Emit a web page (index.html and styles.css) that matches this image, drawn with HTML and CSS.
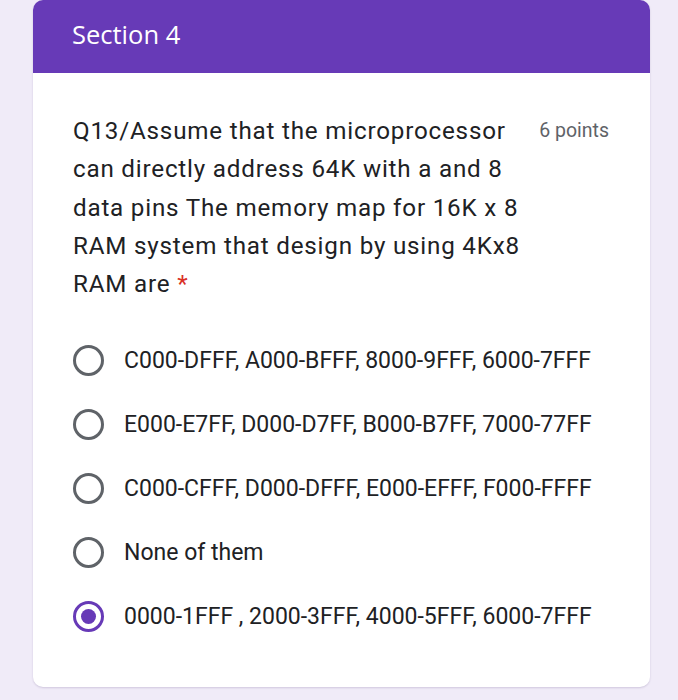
FILE: index.html
```html
<!DOCTYPE html>
<html>
<head>
<meta charset="utf-8">
<link rel="stylesheet" href="styles.css">
</head>
<body>
<div class="card">
  <div class="header">Section 4</div>
  <div class="body">
    <div class="qrow">
      <div class="qtitle">Q13/Assume that the microprocessor<br>can directly address 64K with a and 8<br>data pins The memory map for 16K x 8<br>RAM system that design by using 4Kx8<br>RAM are <span class="req">*</span></div>
      <div class="points">6 points</div>
    </div>
    <div class="options">
      <div class="opt"><span class="radio"></span><span class="label">C000-DFFF, A000-BFFF, 8000-9FFF, 6000-7FFF</span></div>
      <div class="opt"><span class="radio"></span><span class="label">E000-E7FF, D000-D7FF, B000-B7FF, 7000-77FF</span></div>
      <div class="opt"><span class="radio"></span><span class="label">C000-CFFF, D000-DFFF, E000-EFFF, F000-FFFF</span></div>
      <div class="opt"><span class="radio"></span><span class="label">None of them</span></div>
      <div class="opt"><span class="radio checked"></span><span class="label">0000-1FFF , 2000-3FFF, 4000-5FFF, 6000-7FFF</span></div>
    </div>
  </div>
</div>
</body>
</html>
```
FILE: styles.css
```css
html, body {
  margin: 0;
  padding: 0;
  background: #f0ebf8;
}
body {
  width: 678px;
  height: 700px;
  overflow: hidden;
  font-family: Roboto, "Liberation Sans", sans-serif;
}
.card {
  margin-left: 33px;
  width: 617px;
  background: #fff;
  border-radius: 10px;
  box-shadow: 0 1px 2px rgba(60, 40, 100, 0.18);
  overflow: hidden;
}
.header {
  background: #673ab7;
  color: #fff;
  height: 73px;
  box-sizing: border-box;
  padding-left: 39px;
  padding-top: 18px;
  font-size: 25.5px;
  line-height: 32px;
  font-family: "Open Sans", Roboto, sans-serif;
}
.body {
  padding: 39px 41px 39px 40px;
}
.qrow {
  display: flex;
  justify-content: space-between;
  align-items: flex-start;
}
.qtitle {
  width: 462px;
  flex: none;
  font-size: 24.2px;
  letter-spacing: 0.8px;
  line-height: 38.3px;
  color: #202124;
}
.req {
  color: #d93025;
}
.points {
  font-size: 19.5px;
  color: #5f6368;
  line-height: 38px;
}
.options {
  margin-top: 25px;
}
.opt {
  height: 64px;
  display: flex;
  align-items: center;
}
.radio {
  width: 31px;
  height: 31px;
  box-sizing: border-box;
  border: 3px solid #5f6368;
  border-radius: 50%;
  margin-right: 20px;
  position: relative;
  flex: none;
}
.radio.checked {
  border-color: #673ab7;
}
.radio.checked::after {
  content: "";
  position: absolute;
  left: 5px;
  top: 5px;
  width: 15px;
  height: 15px;
  border-radius: 50%;
  background: #673ab7;
}
.label {
  font-size: 23px;
  color: #202124;
}
```
